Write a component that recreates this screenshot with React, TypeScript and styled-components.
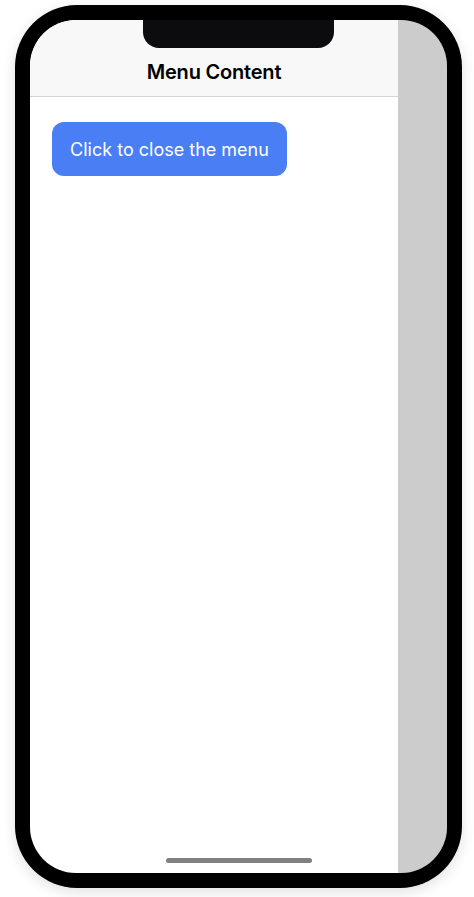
import styled, { createGlobalStyle } from 'styled-components';

const GlobalStyle = createGlobalStyle`
  html, body {
    margin: 0;
    padding: 0;
    background: #ffffff;
  }
  body {
    font-family: Inter, "Liberation Sans", Arial, sans-serif;
  }
`;

export const App = () => {
  return (
    <>
      <GlobalStyle />
      <Page>
        <Phone>
          <Screen>
            <Notch />
            <Header>
              <Title>Menu Content</Title>
            </Header>
            <Content>
              <CloseButton type="button">Click to close the menu</CloseButton>
            </Content>
            <Overlay />
            <HomeIndicator />
          </Screen>
        </Phone>
      </Page>
    </>
  );
};

const Page = styled.div`
  width: 474px;
  height: 897px;
  padding: 5px 0 0 15px;
  box-sizing: border-box;
`;

const Phone = styled.div`
  width: 447px;
  height: 883px;
  padding: 15px;
  box-sizing: border-box;
  background: #000;
  border-radius: 62px;
  box-shadow: 0 4px 14px rgba(0, 0, 0, 0.12);
`;

const Screen = styled.div`
  position: relative;
  height: 100%;
  border-radius: 46px;
  overflow: hidden;
  background: #ffffff;
  display: flex;
  flex-direction: column;
`;

const Notch = styled.div`
  position: absolute;
  top: 0;
  left: 113px;
  width: 191px;
  height: 28px;
  background: #0c0c0e;
  border-radius: 0 0 16px 16px;
  z-index: 3;
`;

const Header = styled.div`
  height: 77px;
  flex-shrink: 0;
  background: #f8f8f8;
  border-bottom: 1px solid #d4d4d4;
  box-sizing: border-box;
  display: flex;
  align-items: flex-end;
  width: 368px;
  justify-content: center;
  padding-bottom: 12px;
`;

const Title = styled.h1`
  margin: 0;
  font-size: 20px;
  font-weight: 600;
  color: #000;
  letter-spacing: -0.2px;
`;

const Content = styled.div`
  flex: 1;
  width: 368px;
  padding: 25px 22px;
  box-sizing: border-box;
`;

const CloseButton = styled.button`
  width: 235px;
  height: 54px;
  border: none;
  border-radius: 12px;
  background: #4a7ef5;
  color: #fff;
  font-family: inherit;
  font-size: 18px;
  font-weight: 400;
  letter-spacing: 0;
  cursor: pointer;
`;

const Overlay = styled.div`
  position: absolute;
  top: 0;
  right: 0;
  bottom: 0;
  width: 49px;
  background: rgba(0, 0, 0, 0.2);
  z-index: 2;
`;

const HomeIndicator = styled.div`
  position: absolute;
  left: 136px;
  bottom: 10px;
  width: 146px;
  height: 5px;
  border-radius: 3px;
  background: #808080;
  z-index: 3;
`;

export default App;
